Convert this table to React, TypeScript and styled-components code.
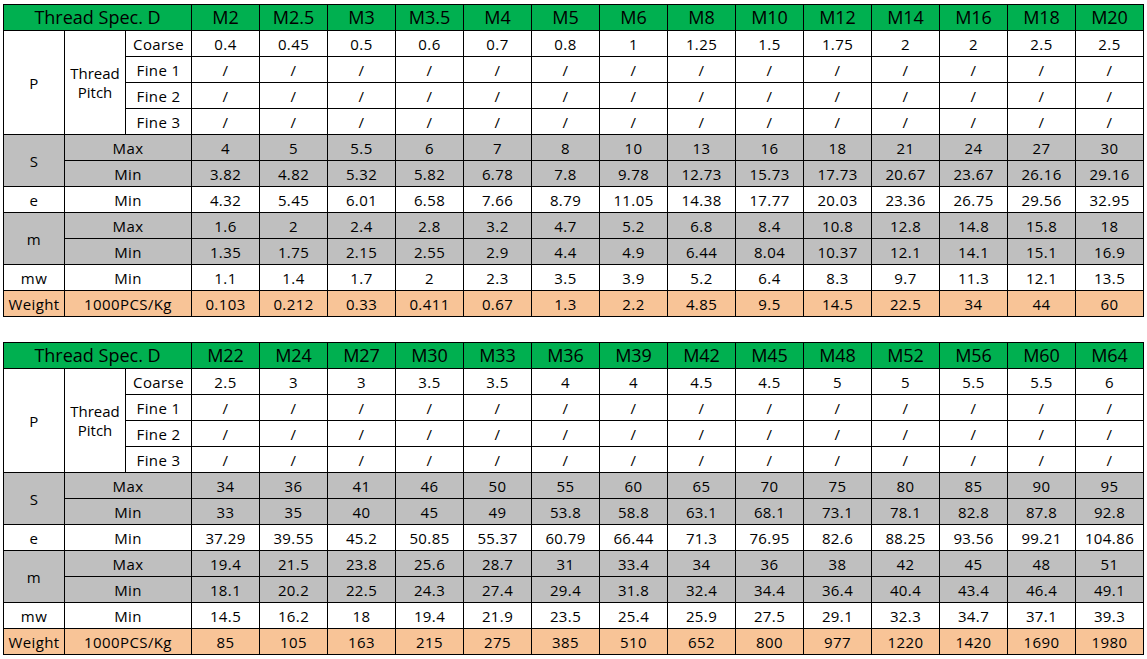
import React from "react";
import styled, { createGlobalStyle } from "styled-components";

const GlobalStyle = createGlobalStyle`
  body {
    margin: 0;
    padding: 4px 3px;
    background: #ffffff;
    font-family: "Open Sans", "Liberation Sans", sans-serif;
    color: #000000;
  }
`;

const Page = styled.div`
  display: flex;
  flex-direction: column;
  gap: 25px;
`;

const Table = styled.table`
  width: 1140px;
  table-layout: fixed;
  border-collapse: collapse;
  border: 1px solid #000;
`;

const HeadCell = styled.th`
  height: 25px;
  padding: 0;
  background: #00b050;
  border: 1px solid #000;
  font-weight: 400;
  font-size: 18px;
  line-height: 25px;
  text-align: center;
  white-space: nowrap;
`;

type Tone = "white" | "gray" | "orange";

const tones: Record<Tone, string> = {
  white: "#ffffff",
  gray: "#bfbfbf",
  orange: "#f8c497",
};

const Cell = styled.td<{ $tone?: Tone }>`
  height: 25px;
  padding: 0;
  background: ${(p) => tones[p.$tone || "white"]};
  border: 1px solid #000;
  font-size: 15px;
  letter-spacing: 0.4px;
  line-height: 18px;
  text-align: center;
  white-space: nowrap;
`;

const PitchLabel = styled.span`
  display: inline-block;
  line-height: 19px;
  letter-spacing: 0;
  white-space: normal;
`;

interface Spec {
  sizes: string[];
  coarse: string[];
  sMax: string[];
  sMin: string[];
  eMin: string[];
  mMax: string[];
  mMin: string[];
  mw: string[];
  weight: string[];
}

const split = (s: string) => s.split(" ");

const specs: Spec[] = [
  {
    sizes: split("M2 M2.5 M3 M3.5 M4 M5 M6 M8 M10 M12 M14 M16 M18 M20"),
    coarse: split("0.4 0.45 0.5 0.6 0.7 0.8 1 1.25 1.5 1.75 2 2 2.5 2.5"),
    sMax: split("4 5 5.5 6 7 8 10 13 16 18 21 24 27 30"),
    sMin: split("3.82 4.82 5.32 5.82 6.78 7.8 9.78 12.73 15.73 17.73 20.67 23.67 26.16 29.16"),
    eMin: split("4.32 5.45 6.01 6.58 7.66 8.79 11.05 14.38 17.77 20.03 23.36 26.75 29.56 32.95"),
    mMax: split("1.6 2 2.4 2.8 3.2 4.7 5.2 6.8 8.4 10.8 12.8 14.8 15.8 18"),
    mMin: split("1.35 1.75 2.15 2.55 2.9 4.4 4.9 6.44 8.04 10.37 12.1 14.1 15.1 16.9"),
    mw: split("1.1 1.4 1.7 2 2.3 3.5 3.9 5.2 6.4 8.3 9.7 11.3 12.1 13.5"),
    weight: split("0.103 0.212 0.33 0.411 0.67 1.3 2.2 4.85 9.5 14.5 22.5 34 44 60"),
  },
  {
    sizes: split("M22 M24 M27 M30 M33 M36 M39 M42 M45 M48 M52 M56 M60 M64"),
    coarse: split("2.5 3 3 3.5 3.5 4 4 4.5 4.5 5 5 5.5 5.5 6"),
    sMax: split("34 36 41 46 50 55 60 65 70 75 80 85 90 95"),
    sMin: split("33 35 40 45 49 53.8 58.8 63.1 68.1 73.1 78.1 82.8 87.8 92.8"),
    eMin: split("37.29 39.55 45.2 50.85 55.37 60.79 66.44 71.3 76.95 82.6 88.25 93.56 99.21 104.86"),
    mMax: split("19.4 21.5 23.8 25.6 28.7 31 33.4 34 36 38 42 45 48 51"),
    mMin: split("18.1 20.2 22.5 24.3 27.4 29.4 31.8 32.4 34.4 36.4 40.4 43.4 46.4 49.1"),
    mw: split("14.5 16.2 18 19.4 21.9 23.5 25.4 25.9 27.5 29.1 32.3 34.7 37.1 39.3"),
    weight: split("85 105 163 215 275 385 510 652 800 977 1220 1420 1690 1980"),
  },
];

const values = (list: string[], tone?: Tone) =>
  list.map((v, i) => (
    <Cell key={i} $tone={tone}>
      {v}
    </Cell>
  ));

const slashes = (n: number) => values(Array(n).fill("/"));

const SpecTable: React.FC<{ spec: Spec }> = ({ spec }) => {
  const n = spec.sizes.length;
  return (
    <Table>
      <colgroup>
        <col style={{ width: 61 }} />
        <col style={{ width: 61 }} />
        <col style={{ width: 66 }} />
        {spec.sizes.map((s) => (
          <col key={s} style={{ width: 68 }} />
        ))}
      </colgroup>
      <thead>
        <tr>
          <HeadCell colSpan={3}>Thread Spec. D</HeadCell>
          {spec.sizes.map((s) => (
            <HeadCell key={s}>{s}</HeadCell>
          ))}
        </tr>
      </thead>
      <tbody>
        <tr>
          <Cell rowSpan={4}>P</Cell>
          <Cell rowSpan={4}>
            <PitchLabel>
              Thread
              <br />
              Pitch
            </PitchLabel>
          </Cell>
          <Cell>Coarse</Cell>
          {values(spec.coarse)}
        </tr>
        {["Fine 1", "Fine 2", "Fine 3"].map((f) => (
          <tr key={f}>
            <Cell>{f}</Cell>
            {slashes(n)}
          </tr>
        ))}
        <tr>
          <Cell $tone="gray" rowSpan={2}>S</Cell>
          <Cell $tone="gray" colSpan={2}>Max</Cell>
          {values(spec.sMax, "gray")}
        </tr>
        <tr>
          <Cell $tone="gray" colSpan={2}>Min</Cell>
          {values(spec.sMin, "gray")}
        </tr>
        <tr>
          <Cell>e</Cell>
          <Cell colSpan={2}>Min</Cell>
          {values(spec.eMin)}
        </tr>
        <tr>
          <Cell $tone="gray" rowSpan={2}>m</Cell>
          <Cell $tone="gray" colSpan={2}>Max</Cell>
          {values(spec.mMax, "gray")}
        </tr>
        <tr>
          <Cell $tone="gray" colSpan={2}>Min</Cell>
          {values(spec.mMin, "gray")}
        </tr>
        <tr>
          <Cell>mw</Cell>
          <Cell colSpan={2}>Min</Cell>
          {values(spec.mw)}
        </tr>
        <tr>
          <Cell $tone="orange">Weight</Cell>
          <Cell $tone="orange" colSpan={2}>1000PCS/Kg</Cell>
          {values(spec.weight, "orange")}
        </tr>
      </tbody>
    </Table>
  );
};

export default function App() {
  return (
    <>
      <GlobalStyle />
      <Page>
        {specs.map((s, i) => (
          <SpecTable key={i} spec={s} />
        ))}
      </Page>
    </>
  );
}
